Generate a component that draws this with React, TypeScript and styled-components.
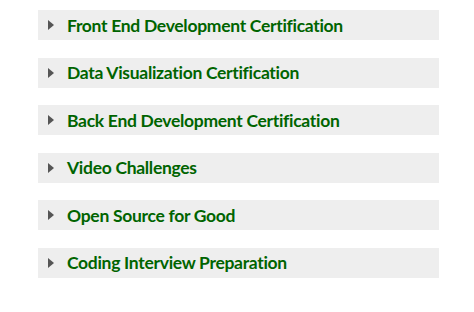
import React from 'react';
import styled, { createGlobalStyle } from 'styled-components';

const items = [
  'Front End Development Certification',
  'Data Visualization Certification',
  'Back End Development Certification',
  'Video Challenges',
  'Open Source for Good',
  'Coding Interview Preparation',
];

const App = () => {
  return (
    <>
      <GlobalStyle />
      <StyledList>
        {items.map((title) => (
          <StyledRow key={title}>
            <StyledCaret />
            <StyledTitle>{title}</StyledTitle>
          </StyledRow>
        ))}
      </StyledList>
    </>
  );
};

export default App;

const GlobalStyle = createGlobalStyle`
  body {
    margin: 0;
    background: #fff;
    font-family: Lato, "Liberation Sans", sans-serif;
  }
`;

const StyledList = styled.div`
  display: flex;
  flex-direction: column;
  gap: 17.5px;
  width: 401px;
  padding: 10px 0 0 38px;
`;

const StyledRow = styled.div`
  display: flex;
  align-items: center;
  height: 30px;
  background: #eeeeee;
  padding-left: 10px;
`;

const StyledCaret = styled.span`
  width: 0;
  height: 0;
  border-top: 5px solid transparent;
  border-bottom: 5px solid transparent;
  border-left: 6px solid #555;
  margin-right: 13px;
`;

const StyledTitle = styled.span`
  color: #006400;
  font-weight: 700;
  font-size: 17.5px;
  letter-spacing: -0.3px;
`;
